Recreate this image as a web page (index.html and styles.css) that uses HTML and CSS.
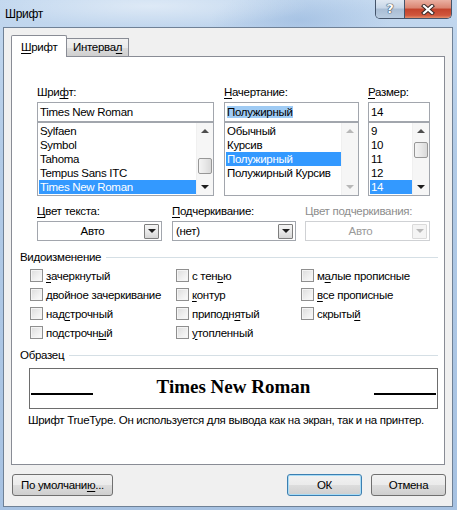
FILE: index.html
```html
<!DOCTYPE html>
<html lang="ru">
<head>
    <meta charset="UTF-8">
    <title>Шрифт</title>
    <link rel="stylesheet" href="styles.css">
</head>
<body>
    <div class="window">
        <div class="titlebar">
            <span class="title">Шрифт</span>
            <div class="caption-buttons">
                <span class="cap-btn help">?</span>
                <span class="cap-btn close">
                    <svg width="14" height="11" viewBox="0 0 14 11">
                        <path d="M3 2 L11 9 M11 2 L3 9" stroke="#3a2a28" stroke-width="4.2" stroke-linecap="square"/>
                        <path d="M3 2 L11 9 M11 2 L3 9" stroke="#fff" stroke-width="2.2" stroke-linecap="square"/>
                    </svg>
                </span>
            </div>
        </div>

        <div class="client">
            <div class="tabs">
                <div class="tab active"><u>Ш</u>рифт</div>
                <div class="tab">Интерва<u>л</u></div>
            </div>

            <div class="panel">
                <div class="font-row">
                    <div class="field col-name">
                        <div class="label">Шри<u>ф</u>т:</div>
                        <div class="edit">Times New Roman</div>
                        <div class="listbox">
                            <ul class="items">
                                <li>Sylfaen</li>
                                <li>Symbol</li>
                                <li>Tahoma</li>
                                <li>Tempus Sans ITC</li>
                                <li class="selected">Times New Roman</li>
                            </ul>
                            <div class="vscroll">
                                <div class="sb-arrow"><span class="tri up"></span></div>
                                <div class="thumb thumb-name"></div>
                                <div class="sb-fill"></div>
                                <div class="sb-arrow"><span class="tri down"></span></div>
                            </div>
                        </div>
                    </div>

                    <div class="field col-style">
                        <div class="label"><u>Н</u>ачертание:</div>
                        <div class="edit"><span class="edit-sel">Полужирный</span></div>
                        <div class="listbox">
                            <ul class="items">
                                <li>Обычный</li>
                                <li>Курсив</li>
                                <li class="selected">Полужирный</li>
                                <li>Полужирный Курсив</li>
                            </ul>
                            <div class="vscroll">
                                <div class="sb-arrow"><span class="tri up off"></span></div>
                                <div class="sb-fill"></div>
                                <div class="sb-arrow"><span class="tri down off"></span></div>
                            </div>
                        </div>
                    </div>

                    <div class="field col-size">
                        <div class="label"><u>Р</u>азмер:</div>
                        <div class="edit">14</div>
                        <div class="listbox">
                            <ul class="items">
                                <li>9</li>
                                <li>10</li>
                                <li>11</li>
                                <li>12</li>
                                <li class="selected">14</li>
                            </ul>
                            <div class="vscroll">
                                <div class="sb-arrow"><span class="tri up"></span></div>
                                <div class="thumb thumb-size"></div>
                                <div class="sb-fill"></div>
                                <div class="sb-arrow"><span class="tri down"></span></div>
                            </div>
                        </div>
                    </div>
                </div>

                <div class="color-row">
                    <div class="field col-wide">
                        <div class="label"><u>Ц</u>вет текста:</div>
                        <div class="combo">
                            <span class="combo-text centered">Авто</span>
                            <span class="combo-btn"><span class="tri down"></span></span>
                        </div>
                    </div>
                    <div class="field col-under">
                        <div class="label"><u>П</u>одчеркивание:</div>
                        <div class="combo">
                            <span class="combo-text">(нет)</span>
                            <span class="combo-btn"><span class="tri down"></span></span>
                        </div>
                    </div>
                    <div class="field col-wide">
                        <div class="label disabled">Цвет подчеркивания:</div>
                        <div class="combo disabled">
                            <span class="combo-text centered">Авто</span>
                            <span class="combo-btn"><span class="tri down off"></span></span>
                        </div>
                    </div>
                </div>

                <div class="group-head">
                    <span>Видоизменение</span>
                    <span class="group-line"></span>
                </div>

                <div class="effects">
                    <label class="check"><span class="box"></span><u>з</u>ачеркнутый</label>
                    <label class="check"><span class="box"></span>с тен<u>ь</u>ю</label>
                    <label class="check"><span class="box"></span>м<u>а</u>лые прописные</label>
                    <label class="check"><span class="box"></span><u>д</u>войное зачеркивание</label>
                    <label class="check"><span class="box"></span><u>к</u>онтур</label>
                    <label class="check"><span class="box"></span><u>в</u>се прописные</label>
                    <label class="check"><span class="box"></span>над<u>с</u>трочный</label>
                    <label class="check"><span class="box"></span>приподн<u>я</u>тый</label>
                    <label class="check"><span class="box"></span>скрыты<u>й</u></label>
                    <label class="check"><span class="box"></span>подстрочн<u>ы</u>й</label>
                    <label class="check"><span class="box"></span><u>у</u>топленный</label>
                </div>

                <div class="group-head sample-head">
                    <span>Образец</span>
                    <span class="group-line"></span>
                </div>

                <div class="sample">
                    <span class="rule"></span>
                    <span class="sample-text">Times New Roman</span>
                    <span class="rule"></span>
                </div>

                <p class="note">Шрифт TrueType. Он используется для вывода как на экран, так и на принтер.</p>
            </div>

            <div class="footer">
                <button class="btn btn-default-set">По умолчани<u>ю</u>...</button>
                <button class="btn btn-ok">ОК</button>
                <button class="btn btn-cancel">Отмена</button>
            </div>
        </div>
    </div>
</body>
</html>
```

FILE: styles.css
```css
* {
    box-sizing: border-box;
}

body {
    margin: 0;
    font-family: "Liberation Sans", Arial, sans-serif;
    font-size: 11.5px;
    line-height: 14px;
    letter-spacing: -0.3px;
    color: #000;
}

u {
    text-decoration-thickness: 1px;
    text-underline-offset: 2px;
}

/* window frame */
.window {
    width: 457px;
    height: 510px;
    padding: 0 4px 3px 3px;
    display: flex;
    flex-direction: column;
    white-space: nowrap;
    background:
        radial-gradient(ellipse 160px 22px at 150px 6px, rgba(255, 255, 255, 0.45), transparent),
        radial-gradient(ellipse 90px 30px at 300px 20px, rgba(120, 160, 210, 0.35), transparent),
        linear-gradient(180deg, #c3d8ef 0%, #b2cbe7 30%, #a7c2e2 100%);
}

.titlebar {
    height: 27px;
    display: flex;
    justify-content: space-between;
    align-items: flex-start;
}

.title {
    margin: 7px 0 0 2px;
    font-size: 12px;
    line-height: 14px;
}

.caption-buttons {
    display: flex;
    height: 19px;
    margin-right: 1px;
    border: 1px solid #44546a;
    border-top: none;
    border-radius: 0 0 5px 5px;
    overflow: hidden;
}

.cap-btn {
    display: flex;
    align-items: center;
    justify-content: center;
}

.cap-btn.help {
    width: 29px;
    border-right: 1px solid #44546a;
    background: linear-gradient(180deg, #dfe8f2 0%, #c7d6e7 45%, #a9bdd4 50%, #b9cce1 100%);
    color: #fff;
    font-family: "DejaVu Sans", sans-serif;
    font-weight: bold;
    font-size: 13px;
    letter-spacing: 0;
    text-shadow: 0 0 1px #2b3a4c, 0 0 1px #2b3a4c, 0 0 1px #2b3a4c;
}

.cap-btn.close {
    width: 46px;
    background: linear-gradient(180deg, #eab0a2 0%, #da8470 45%, #c3432c 50%, #d0563c 85%, #e48f6c 100%);
}

.client {
    flex: 1;
    background: #f0f0f0;
    border: 1px solid #6f8196;
    display: flex;
    flex-direction: column;
}

/* tabs */
.tabs {
    display: flex;
    align-items: flex-end;
    margin: 7px 0 -1px 7px;
    position: relative;
    z-index: 1;
}

.tab {
    height: 19px;
    padding: 0 6px;
    border: 1px solid #898c95;
    border-left: none;
    line-height: 17px;
    background: linear-gradient(180deg, #f2f2f2 0%, #ebebeb 50%, #dddddd 50%, #cfcfcf 100%);
}

.tab.active {
    height: 22px;
    width: 56px;
    padding: 0 0 0 9px;
    border-left: 1px solid #898c95;
    border-bottom: none;
    border-radius: 2px 2px 0 0;
    background: #fff;
    line-height: 22px;
}

.panel {
    margin-left: 7px;
    width: 434px;
    height: 409px;
    background: #fff;
    border: 1px solid #898c95;
    padding-top: 28px;
}

/* font / style / size lists */
.font-row,
.color-row {
    display: flex;
    padding-left: 25px;
}

.field {
    display: flex;
    flex-direction: column;
}

.col-name { width: 177px; }
.col-style { width: 135px; margin-left: 10px; }
.col-size { width: 62px; margin-left: 9px; }

.label {
    height: 17px;
    line-height: 15px;
}

.label.disabled {
    color: #8d8d8d;
}

.edit {
    height: 20px;
    border: 1px solid #a2a6ad;
    padding: 0 2px;
    line-height: 18px;
}

.edit-sel {
    background: #9fcbf4;
}

.listbox {
    height: 74px;
    border: 1px solid #a2a6ad;
    display: flex;
}

.items {
    flex: 1;
    list-style: none;
    margin: 0;
    padding: 1px 0 0 1px;
}

.items li {
    height: 14px;
    line-height: 14px;
    padding-left: 1px;
}

.items li.selected {
    background: #3399ff;
    color: #fff;
}

.vscroll {
    width: 17px;
    display: flex;
    flex-direction: column;
    background: #f6f6f6;
    border-left: 1px solid #f0f0f0;
}

.sb-arrow {
    height: 16px;
    display: flex;
    align-items: center;
    justify-content: center;
}

.sb-fill {
    flex: 1;
}

.thumb {
    height: 16px;
    margin: 0 1px;
    border: 1px solid #979797;
    border-radius: 2px;
    background: linear-gradient(90deg, #f4f4f4 0%, #e8e8e8 50%, #d9d9d9 100%);
}

.thumb-name { margin-top: 19px; }
.thumb-size { margin-top: 3px; }

.tri {
    width: 0;
    height: 0;
    border-left: 4px solid transparent;
    border-right: 4px solid transparent;
}

.tri.up { border-bottom: 4px solid #4e4e4e; }
.tri.down { border-top: 4px solid #1e1e1e; }
.tri.up.off { border-bottom-color: #b8b8b8; }
.tri.down.off { border-top-color: #b8b8b8; }

/* colour and underline combos */
.color-row {
    margin-top: 8px;
}

.col-wide { width: 125px; }
.col-under { width: 124px; margin-left: 10px; }
.col-wide + .col-under + .col-wide { margin-left: 9px; }

.combo {
    height: 20px;
    border: 1px solid #a2a6ad;
    display: flex;
    align-items: center;
    padding: 0 2px 0 3px;
}

.combo-text {
    flex: 1;
}

.combo-text.centered {
    text-align: center;
}

.combo-btn {
    width: 15px;
    height: 15px;
    border: 1px solid #7d7d7d;
    border-radius: 1px;
    background: linear-gradient(180deg, #f4f4f4 0%, #e9e9e9 50%, #d6d6d6 100%);
    display: flex;
    align-items: center;
    justify-content: center;
}

.combo.disabled {
    border-color: #cfd1d4;
    color: #9a9a9a;
}

.combo.disabled .combo-btn {
    border-color: #dadada;
    background: #f4f4f4;
}

/* groups */
.group-head {
    display: flex;
    align-items: center;
    margin: 8px 6px 0 8px;
    height: 16px;
}

.group-line {
    flex: 1;
    height: 1px;
    margin-left: 5px;
    background: #d5dfe5;
}

.effects {
    display: grid;
    grid-template-columns: 146px 125px 1fr;
    grid-auto-rows: 19px;
    margin: 1px 0 0 18px;
}

.check {
    display: flex;
    align-items: center;
}

.box {
    width: 13px;
    height: 13px;
    margin-right: 3px;
    border: 1px solid #8f8f8f;
    background: linear-gradient(135deg, #dcdcdc 0%, #f0f0f0 60%, #fbfbfb 100%);
    box-shadow: inset 0 0 0 1px #f4f4f4;
}

.sample-head {
    margin-top: 5px;
}

.sample {
    display: flex;
    align-items: flex-end;
    height: 41px;
    margin: 5px 6px 0 17px;
    border: 1px solid #6d6d6d;
    padding: 0 1px 13px 1px;
}

.rule {
    width: 62px;
    height: 2px;
    background: #000;
}

.sample-text {
    flex: 1;
    text-align: center;
    font-family: "Liberation Serif", "Times New Roman", serif;
    font-weight: bold;
    font-size: 19px;
    line-height: 16px;
    letter-spacing: 0;
}

.note {
    margin: 4px 0 0 16px;
    line-height: 14px;
}

/* dialog buttons */
.footer {
    display: flex;
    margin-top: 9px;
    padding: 0 6px 0 8px;
}

.btn {
    height: 22px;
    font-family: inherit;
    font-size: 11.5px;
    letter-spacing: -0.3px;
    color: #000;
    border: 1px solid #707070;
    border-radius: 3px;
    background: linear-gradient(180deg, #f2f2f2 0%, #ebebeb 50%, #dddddd 50%, #cfcfcf 100%);
    padding: 0;
}

.btn-default-set { width: 101px; }

.btn-ok {
    width: 75px;
    margin-left: auto;
    border-color: #3c7fb1;
    box-shadow: inset 0 0 0 1px #a9dcf6;
}

.btn-cancel {
    width: 75px;
    margin-left: 9px;
}
```
